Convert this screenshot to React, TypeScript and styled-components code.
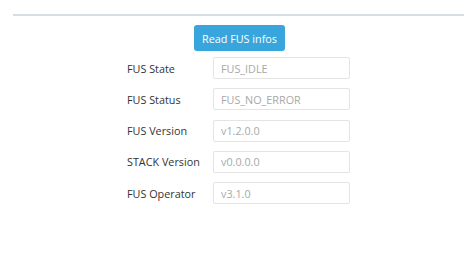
import { Fragment } from "react";
import styled, { createGlobalStyle } from "styled-components";

const GlobalStyle = createGlobalStyle`
  html, body {
    margin: 0;
    padding: 0;
    background: #ffffff;
    font-family: "Open Sans", "Liberation Sans", sans-serif;
  }
`;

const Page = styled.div`
  width: 474px;
  height: 271px;
  padding: 14px 10px 0 13px;
  box-sizing: border-box;
`;

const Divider = styled.hr`
  margin: 0;
  border: none;
  height: 2px;
  background: #d3dee5;
`;

const Toolbar = styled.div`
  display: flex;
  justify-content: center;
  padding: 9px 0 0 2px;
`;

const Button = styled.button`
  width: 91px;
  height: 26px;
  border: none;
  border-radius: 3px;
  background: #38a6dc;
  color: #ffffff;
  font-family: "Open Sans", "Liberation Sans", sans-serif;
  font-size: 10.8px;
  padding: 0;
  cursor: pointer;
`;

const Form = styled.div`
  display: grid;
  grid-template-columns: 86px 137px;
  grid-auto-rows: 22px;
  row-gap: 9.25px;
  align-items: center;
  margin: 6px 0 0 114px;
`;

const Label = styled.label`
  font-size: 10.8px;
  color: #333333;
`;

const Field = styled.input`
  box-sizing: border-box;
  width: 137px;
  height: 22px;
  border: 1px solid #e4e4e4;
  border-radius: 2px;
  padding: 0 7px;
  font-family: "Open Sans", "Liberation Sans", sans-serif;
  font-size: 10.8px;
  color: #a8a8a8;
  background: #ffffff;
  outline: none;
  &::placeholder {
    color: #a8a8a8;
  }
`;

const fields = [
  { label: "FUS State", value: "FUS_IDLE" },
  { label: "FUS Status", value: "FUS_NO_ERROR" },
  { label: "FUS Version", value: "v1.2.0.0" },
  { label: "STACK Version", value: "v0.0.0.0" },
  { label: "FUS Operator", value: "v3.1.0" },
];

export default function App() {
  return (
    <Page>
      <GlobalStyle />
      <Divider />
      <Toolbar>
        <Button>Read FUS infos</Button>
      </Toolbar>
      <Form>
        {fields.map(f => (
          <Fragment key={f.label}>
            <Label>{f.label}</Label>
            <Field placeholder={f.value} readOnly />
          </Fragment>
        ))}
      </Form>
    </Page>
  );
}
